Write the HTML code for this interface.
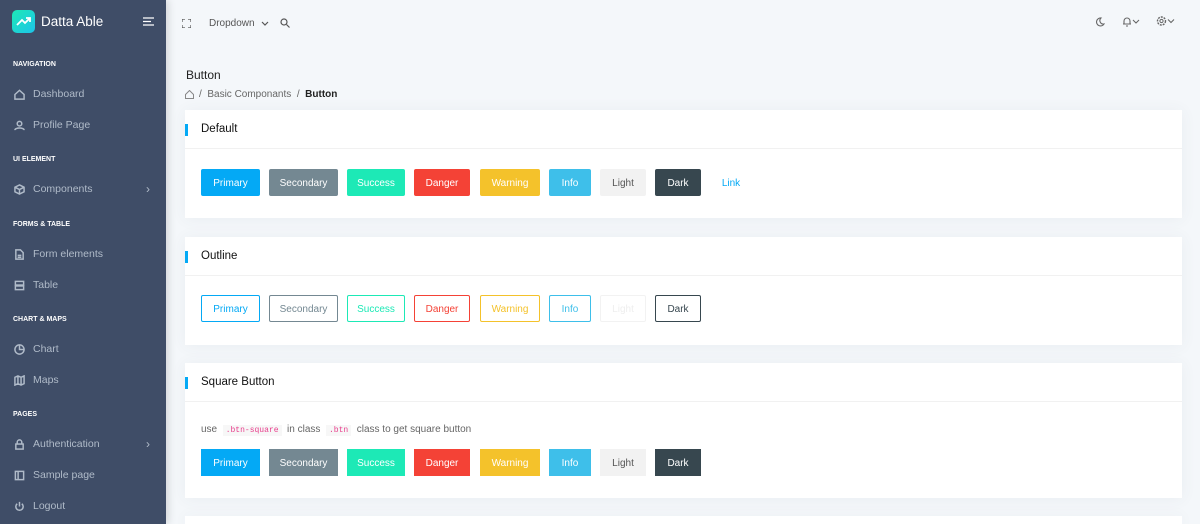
<!DOCTYPE html>
<html><head><meta charset="utf-8"><style>
*{box-sizing:border-box;margin:0;padding:0}
html,body{width:1200px;height:524px;overflow:hidden}
body{background:#f4f7fa;font-family:"Liberation Sans",sans-serif;position:relative;color:#333}
.sb{position:absolute;left:0;top:0;width:166px;height:524px;background:#3f4d67;box-shadow:2px 0 8px rgba(0,0,0,.15)}
.logo{position:absolute;left:12px;top:10px;width:23px;height:23px;border-radius:5px;background:linear-gradient(135deg,#1de9b6,#1dc4e9)}
.brand{position:absolute;left:41px;top:14px;color:#fff;font-size:13.5px}
.cap{position:absolute;left:13px;color:#fff;font-size:7px;font-weight:bold}
.it{position:absolute;left:14px;color:#b0bbc9;font-size:10.5px;display:flex;align-items:center}
.it svg{width:11px;height:11px;margin-right:8px;stroke:#b0bbc9;fill:none;stroke-width:1.6}
.arr{position:absolute;left:146px;color:#b0bbc9;font-size:12px}
.t{position:absolute;font-size:10px;color:#333}
.card{position:absolute;left:185px;width:997px;background:#fff;box-shadow:0 1px 15px rgba(69,90,100,.06)}
.ch{height:39px;border-bottom:1px solid #f1f1f1;position:relative}
.ch:before{content:"";position:absolute;left:0;top:14px;width:3px;height:12px;background:#04a9f5}
.ch span{position:absolute;left:16px;top:13px;font-size:11.5px;color:#111}
.b{position:absolute;height:27px;border-radius:2px;font-size:10px;color:#fff;display:flex;align-items:center;justify-content:center;padding-top:1px}
.o{background:#fff!important;border:1px solid}
</style></head><body>
<div class="sb">
<div class="logo"><svg width="23" height="23" viewBox="0 0 23 23"><path d="M5 15l5-5 3 3 5-5M14 8h4v4" stroke="#fff" stroke-width="1.8" fill="none"/></svg></div>
<div class="brand">Datta Able</div>
<svg style="position:absolute;left:143px;top:17px" width="11" height="9"><path d="M0 1h11M0 4.5h8M0 8h11" stroke="#fff" stroke-width="1.2"/></svg>
<div class="cap" style="top:61px">NAVIGATION</div>
<div class="it" style="top:88px"><svg viewBox="0 0 12 12"><path d="M1 6l5-4.5L11 6v5H1z"/></svg>Dashboard</div>
<div class="it" style="top:119px"><svg viewBox="0 0 12 12"><circle cx="6" cy="4" r="2.5"/><path d="M1 11c0-3 10-3 10 0"/></svg>Profile Page</div>
<div class="cap" style="top:156px">UI ELEMENT</div>
<div class="it" style="top:183px"><svg viewBox="0 0 12 12"><path d="M6 1l5 2.5v5L6 11 1 8.5v-5zM1 3.5L6 6l5-2.5M6 6v5"/></svg>Components</div><div class="arr" style="top:182px">›</div>
<div class="cap" style="top:221px">FORMS &amp; TABLE</div>
<div class="it" style="top:248px"><svg viewBox="0 0 12 12"><path d="M2 1h5l3 3v7H2zM4 7h4M4 9h4"/></svg>Form elements</div>
<div class="it" style="top:279px"><svg viewBox="0 0 12 12"><rect x="1.5" y="1.5" width="9" height="4"/><rect x="1.5" y="6.5" width="9" height="4"/></svg>Table</div>
<div class="cap" style="top:316px">CHART &amp; MAPS</div>
<div class="it" style="top:343px"><svg viewBox="0 0 12 12"><circle cx="6" cy="6" r="5"/><path d="M6 1v5h5"/></svg>Chart</div>
<div class="it" style="top:374px"><svg viewBox="0 0 12 12"><path d="M1 2.5l3.3-1.5 3.4 1.5L11 1v8.5L7.7 11 4.3 9.5 1 11zM4.3 1v8.5M7.7 2.5V11"/></svg>Maps</div>
<div class="cap" style="top:411px">PAGES</div>
<div class="it" style="top:438px"><svg viewBox="0 0 12 12"><rect x="2" y="5.5" width="8" height="5.5"/><path d="M3.5 5.5V3.5a2.5 2.5 0 015 0v2"/></svg>Authentication</div><div class="arr" style="top:437px">›</div>
<div class="it" style="top:469px"><svg viewBox="0 0 12 12"><rect x="1.5" y="1.5" width="9" height="9"/><path d="M4.5 1.5v9"/></svg>Sample page</div>
<div class="it" style="top:500px"><svg viewBox="0 0 12 12"><path d="M6 1v5M3.5 3a4 4 0 105 0"/></svg>Logout</div>
</div>
<svg style="position:absolute;left:182px;top:19px" width="9" height="9"><path d="M0 3V0h3M6 0h3v3M9 6v3H6M3 9H0V6" stroke="#555" fill="none" stroke-width="1.2"/></svg>
<div class="t" style="left:209px;top:18px;color:#555;font-size:10px">Dropdown</div>
<svg style="position:absolute;left:261px;top:21px" width="8" height="5"><path d="M1 1l3 3 3-3" stroke="#555" fill="none" stroke-width="1.2"/></svg>
<svg style="position:absolute;left:280px;top:18px" width="10" height="10"><circle cx="4" cy="4" r="3" stroke="#555" fill="none" stroke-width="1.2"/><path d="M6.5 6.5l3 3" stroke="#555" stroke-width="1.2"/></svg>
<svg style="position:absolute;left:1095px;top:17px" width="10" height="10"><path d="M6 1a4 4 0 103 6 3.5 3.5 0 01-3-6z" stroke="#666" fill="none" stroke-width="1.1"/></svg>
<svg style="position:absolute;left:1121px;top:16px" width="20" height="11"><path d="M2 8h8M3 8V5a3 3 0 016 0v3M5 10h2M12 4l3 3 3-3" stroke="#666" fill="none" stroke-width="1.1"/></svg>
<svg style="position:absolute;left:1156px;top:15px" width="20" height="12"><circle cx="5.5" cy="6" r="4" stroke="#666" fill="none" stroke-width="1.4" stroke-dasharray="2 1"/><circle cx="5.5" cy="6" r="1.6" stroke="#666" fill="none"/><path d="M12 4.5l3 3 3-3" stroke="#666" fill="none" stroke-width="1.1"/></svg>
<div class="t" style="left:186px;top:68px;font-size:12px;color:#222">Button</div>
<svg style="position:absolute;left:185px;top:90px" width="9" height="9"><path d="M.5 4.5l4-4 4 4v4h-8z" stroke="#888" fill="none"/></svg>
<div class="t" style="left:199px;top:89px;color:#666;font-size:10px">/&nbsp; Basic Componants &nbsp;/&nbsp; <b style="color:#222">Button</b></div>

<div class="card" style="top:110px;height:108px"><div class="ch"><span>Default</span></div>
<div class="b" style="left:16px;top:59px;width:59px;background:#04a9f5">Primary</div>
<div class="b" style="left:84px;top:59px;width:69px;background:#748892">Secondary</div>
<div class="b" style="left:162px;top:59px;width:58px;background:#1de9b6">Success</div>
<div class="b" style="left:229px;top:59px;width:56px;background:#f44236">Danger</div>
<div class="b" style="left:295px;top:59px;width:60px;background:#f4c22b">Warning</div>
<div class="b" style="left:364px;top:59px;width:42px;background:#3ebfea">Info</div>
<div class="b" style="left:415px;top:59px;width:46px;background:#f2f2f2;color:#555">Light</div>
<div class="b" style="left:470px;top:59px;width:46px;background:#37474f">Dark</div>
<div class="b" style="left:530px;top:59px;width:32px;color:#04a9f5">Link</div>
</div>
<div class="card" style="top:237px;height:108px"><div class="ch"><span>Outline</span></div>
<div class="b o" style="left:16px;top:58px;width:59px;border-color:#04a9f5;color:#04a9f5">Primary</div>
<div class="b o" style="left:84px;top:58px;width:69px;border-color:#748892;color:#748892">Secondary</div>
<div class="b o" style="left:162px;top:58px;width:58px;border-color:#1de9b6;color:#1de9b6">Success</div>
<div class="b o" style="left:229px;top:58px;width:56px;border-color:#f44236;color:#f44236">Danger</div>
<div class="b o" style="left:295px;top:58px;width:60px;border-color:#f4c22b;color:#f4c22b">Warning</div>
<div class="b o" style="left:364px;top:58px;width:42px;border-color:#3ebfea;color:#3ebfea">Info</div>
<div class="b o" style="left:415px;top:58px;width:46px;border-color:#f2f2f2;color:#eee">Light</div>
<div class="b o" style="left:470px;top:58px;width:46px;border-color:#37474f;color:#37474f">Dark</div>
</div>
<div class="card" style="top:363px;height:135px"><div class="ch"><span>Square Button</span></div>
<div class="t" style="left:16px;top:61px;color:#666;font-size:10px">use &nbsp;<code style="font-family:'Liberation Mono',monospace;font-size:8px;color:#e83e8c;background:#f7f7f7;padding:1px 3px">.btn-square</code>&nbsp; in class &nbsp;<code style="font-family:'Liberation Mono',monospace;font-size:8px;color:#e83e8c;background:#f7f7f7;padding:1px 3px">.btn</code>&nbsp; class to get square button</div>
<div class="b" style="left:16px;top:86px;width:59px;background:#04a9f5;border-radius:0">Primary</div>
<div class="b" style="left:84px;top:86px;width:69px;background:#748892;border-radius:0">Secondary</div>
<div class="b" style="left:162px;top:86px;width:58px;background:#1de9b6;border-radius:0">Success</div>
<div class="b" style="left:229px;top:86px;width:56px;background:#f44236;border-radius:0">Danger</div>
<div class="b" style="left:295px;top:86px;width:60px;background:#f4c22b;border-radius:0">Warning</div>
<div class="b" style="left:364px;top:86px;width:42px;background:#3ebfea;border-radius:0">Info</div>
<div class="b" style="left:415px;top:86px;width:46px;background:#f2f2f2;color:#555;border-radius:0">Light</div>
<div class="b" style="left:470px;top:86px;width:46px;background:#37474f;border-radius:0">Dark</div>
</div>
<div class="card" style="top:516px;height:8px"></div>
</body></html>
